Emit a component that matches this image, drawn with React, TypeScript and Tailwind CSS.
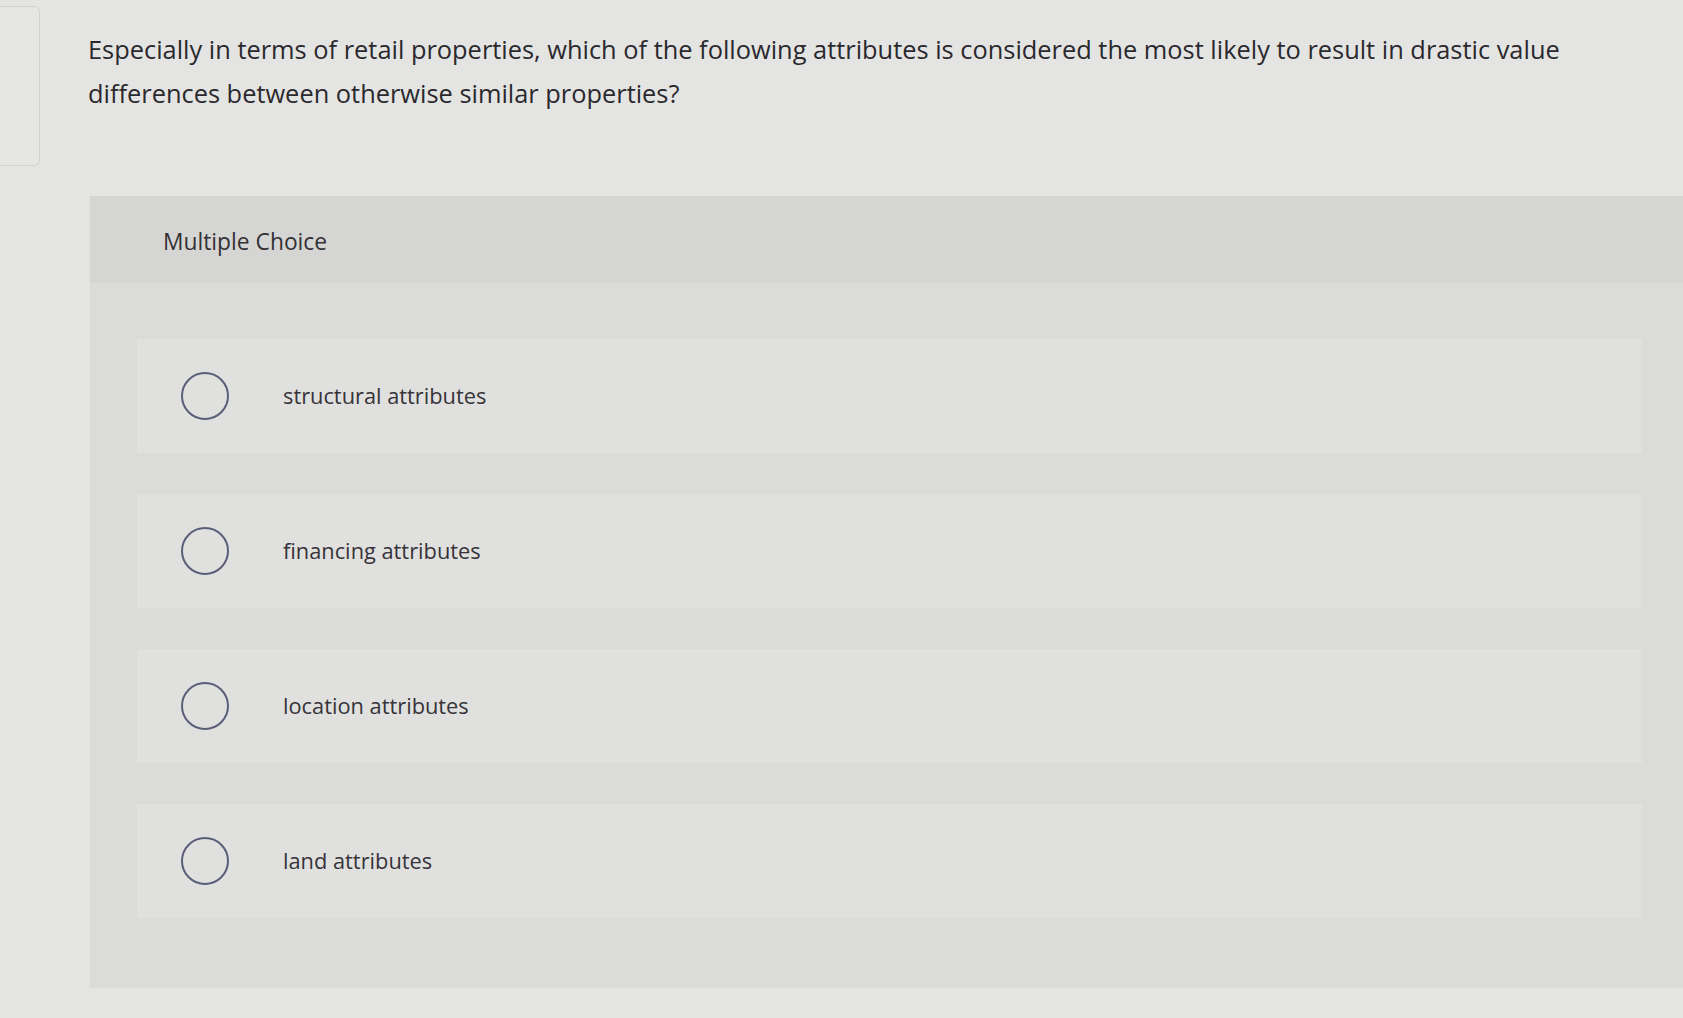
const options: string[] = [
    "structural attributes",
    "financing attributes",
    "location attributes",
    "land attributes",
]

const OptionRow = ({ label }: { label: string }) => {
    return (
        <li className="flex items-center h-[114px] bg-[#e0e1df] pl-[44px]">
            <span className="block w-[48px] h-[48px] rounded-full border-2 border-[#5a5e78] shrink-0" />
            <span className="ml-[54px] text-[21.8px] text-[#363339]">{label}</span>
        </li>
    )
}

const App = () => {
    return (
        <div className="relative w-[1683px] h-[1018px] overflow-hidden bg-[#e4e5e3] font-['Open_Sans','Lato',sans-serif]">
            {/* side tab on the far left */}
            <div className="absolute left-0 top-[6px] w-[40px] h-[160px] rounded-r-md border border-l-0 border-[#d2d3d1] bg-[#e6e7e5]" />

            <div className="pt-[27px] pl-[88px] w-[1630px]">
                <p className="text-[25.4px] leading-[44px] text-[#2b292e]">
                    Especially in terms of retail properties, which of the following attributes is considered the most likely to result in drastic value differences between otherwise similar properties?
                </p>
            </div>

            <section className="ml-[90px] mt-[81px] h-[792px] bg-[#dbdcda]">
                <div className="h-[87px] bg-[#d5d6d4] flex items-center pl-[73px] pt-[6px]">
                    <span className="text-[22.8px] text-[#333135]">Multiple Choice</span>
                </div>
                <ul className="flex flex-col gap-[41px] pt-[56px] pl-[47px] pr-[41px]">
                    {options.map(opt => <OptionRow key={opt} label={opt} />)}
                </ul>
            </section>
        </div>
    )
}

export default App
